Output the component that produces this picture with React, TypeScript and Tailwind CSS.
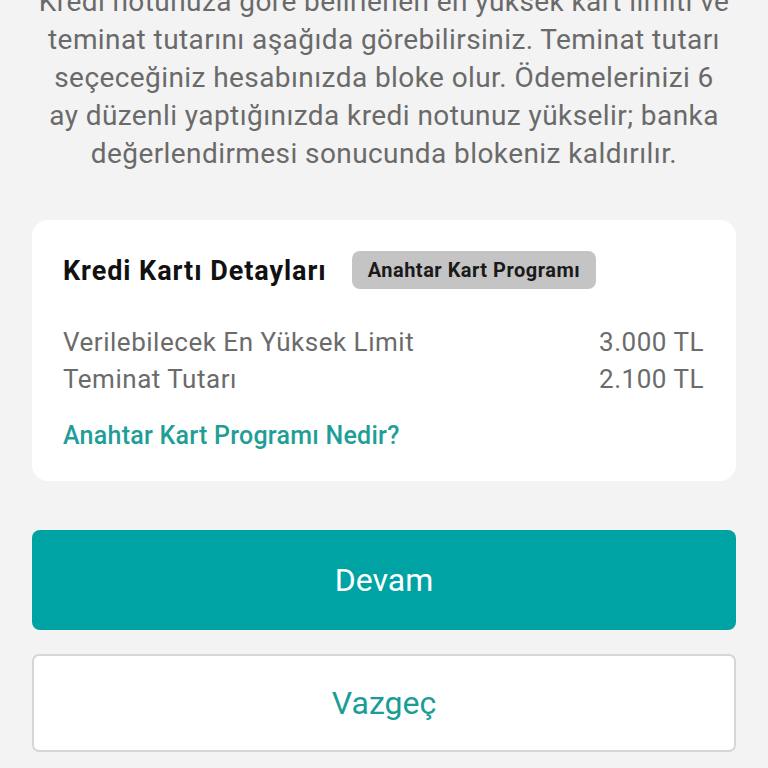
import React from 'react'

const ROWS = [
  { label: 'Verilebilecek En Yüksek Limit', value: '3.000 TL' },
  { label: 'Teminat Tutarı', value: '2.100 TL' },
]

export default function App() {
  return (
    <div
      className="min-h-[768px] bg-[#f3f3f3] px-8 overflow-hidden"
      style={{ fontFamily: 'Roboto, "Noto Sans", sans-serif' }}
    >
      <p className="-mt-[17px] text-center text-[28px] leading-[38px] tracking-[0.015em] text-[#6a6a6a] whitespace-nowrap">
        Kredi notunuza göre belirlenen en yüksek kart limiti ve
        <br />
        teminat tutarını aşağıda görebilirsiniz. Teminat tutarı
        <br />
        seçeceğiniz hesabınızda bloke olur. Ödemelerinizi 6
        <br />
        ay düzenli yaptığınızda kredi notunuz yükselir; banka
        <br />
        değerlendirmesi sonucunda blokeniz kaldırılır.
      </p>

      <div className="mt-[47px] bg-white rounded-[16px] pl-[31px] pr-[32px] pt-[31px] pb-[30px]">
        <div className="flex items-center h-[38px] gap-[25px]">
          <span className="mt-[3px] text-[27px] font-bold tracking-[0.035em] text-[#111]">Kredi Kartı Detayları</span>
          <span className="h-[38px] flex items-center rounded-[8px] bg-[#c4c4c4] px-4 text-[20px] font-bold tracking-[0.025em] text-[#1a1a1a]">
            Anahtar Kart Programı
          </span>
        </div>
        <div className="mt-[35px] flex flex-col">
          {ROWS.map((r) => (
            <div key={r.label} className="flex justify-between text-[26px] leading-[37px] tracking-[0.02em] text-[#6b6b6b]">
              <span>{r.label}</span>
              <span>{r.value}</span>
            </div>
          ))}
        </div>
        <div className="mt-[23px] text-[25px] leading-[30px] font-medium tracking-[0.01em] text-[#1f9e98]">
          Anahtar Kart Programı Nedir?
        </div>
      </div>

      <button className="mt-[49px] w-full h-[100px] rounded-[8px] bg-[#00a3a3] text-white text-[32px]">
        Devam
      </button>
      <button className="mt-[24px] w-full h-[98px] rounded-[7px] bg-white border-2 border-[#d6d6d6] text-[#1a9c97] text-[32px]">
        Vazgeç
      </button>
    </div>
  )
}
